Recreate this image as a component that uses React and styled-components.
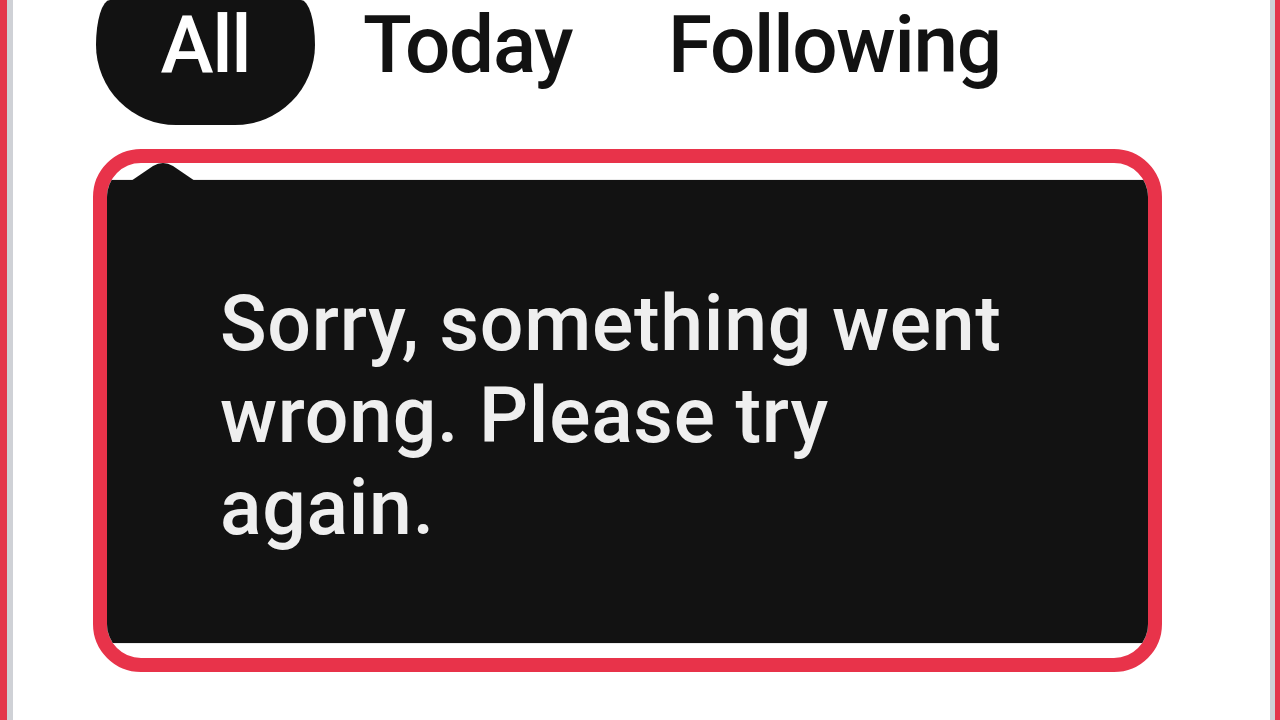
import styled, { createGlobalStyle } from "styled-components";

const GlobalStyle = createGlobalStyle`
  html, body {
    margin: 0;
    padding: 0;
    background: #ffffff;
  }

  body {
    font-family: Roboto, "Liberation Sans", Arial, sans-serif;
    overflow: hidden;
  }
`;

const tabs = ["All", "Today", "Following"];

const Frame = styled.div`
  height: 720px;
  border-left: 7px solid #e4364b;
  border-right: 5px solid #e4364b;
  box-sizing: border-box;
  overflow: hidden;
`;

const Screen = styled.div`
  display: flow-root;
  height: 100%;
  border-left: 6px solid #cfd1d6;
  border-right: 5px solid #cfd1d6;
  background: #ffffff;
  padding-left: 80px;
  box-sizing: border-box;
`;

const TabRow = styled.nav`
  display: flex;
  height: 125px;
  padding-left: 3px;
`;

const Tab = styled.div`
  display: flex;
  align-items: center;
  justify-content: center;
  height: 100%;
  padding: 0 ${({ $active }) => ($active ? "0" : "48px")} 35px;
  width: ${({ $active }) => ($active ? "219px" : "auto")};
  box-sizing: border-box;
  border-radius: 14px 14px 80px 80px / 45px 45px 80px 80px;
  background: ${({ $active }) => ($active ? "#121212" : "transparent")};
  color: ${({ $active }) => ($active ? "#ffffff" : "#121212")};
  font-size: 80px;
  font-weight: 500;
  line-height: 1;
  letter-spacing: -1.3px;
`;

const Highlight = styled.section`
  width: 1069px;
  margin-top: 24px;
  border: 14px solid #e8334a;
  border-radius: 48px;
  padding: 17px 0 15px;
  box-sizing: border-box;
  overflow: hidden;
`;

const Toast = styled.div`
  position: relative;
  background: #121212;
  box-shadow: 0 0 1px 0 #8a8a8a;
  padding: 98px 40px 89px 113px;
`;

const Arrow = styled.svg`
  position: absolute;
  top: -17px;
  left: 24px;
  display: block;
`;

const Message = styled.p`
  margin: 0;
  max-width: 805px;
  color: #efefef;
  font-size: 77px;
  font-weight: 500;
  line-height: 92px;
  letter-spacing: 0.7px;
`;

export default function App() {
  return (
    <>
      <GlobalStyle />
      <Frame>
        <Screen>
          <TabRow>
            {tabs.map((tab, i) => (
              <Tab key={tab} $active={i === 0}>
                {tab}
              </Tab>
            ))}
          </TabRow>
          <Highlight>
            <Toast>
              <Arrow width="64" height="18" viewBox="0 0 64 18">
                <path d="M0 18 L22 3 Q27 0 32 0 Q37 0 42 3 L64 18 Z" fill="#121212" />
              </Arrow>
              <Message>Sorry, something went wrong. Please try again.</Message>
            </Toast>
          </Highlight>
        </Screen>
      </Frame>
    </>
  );
}
